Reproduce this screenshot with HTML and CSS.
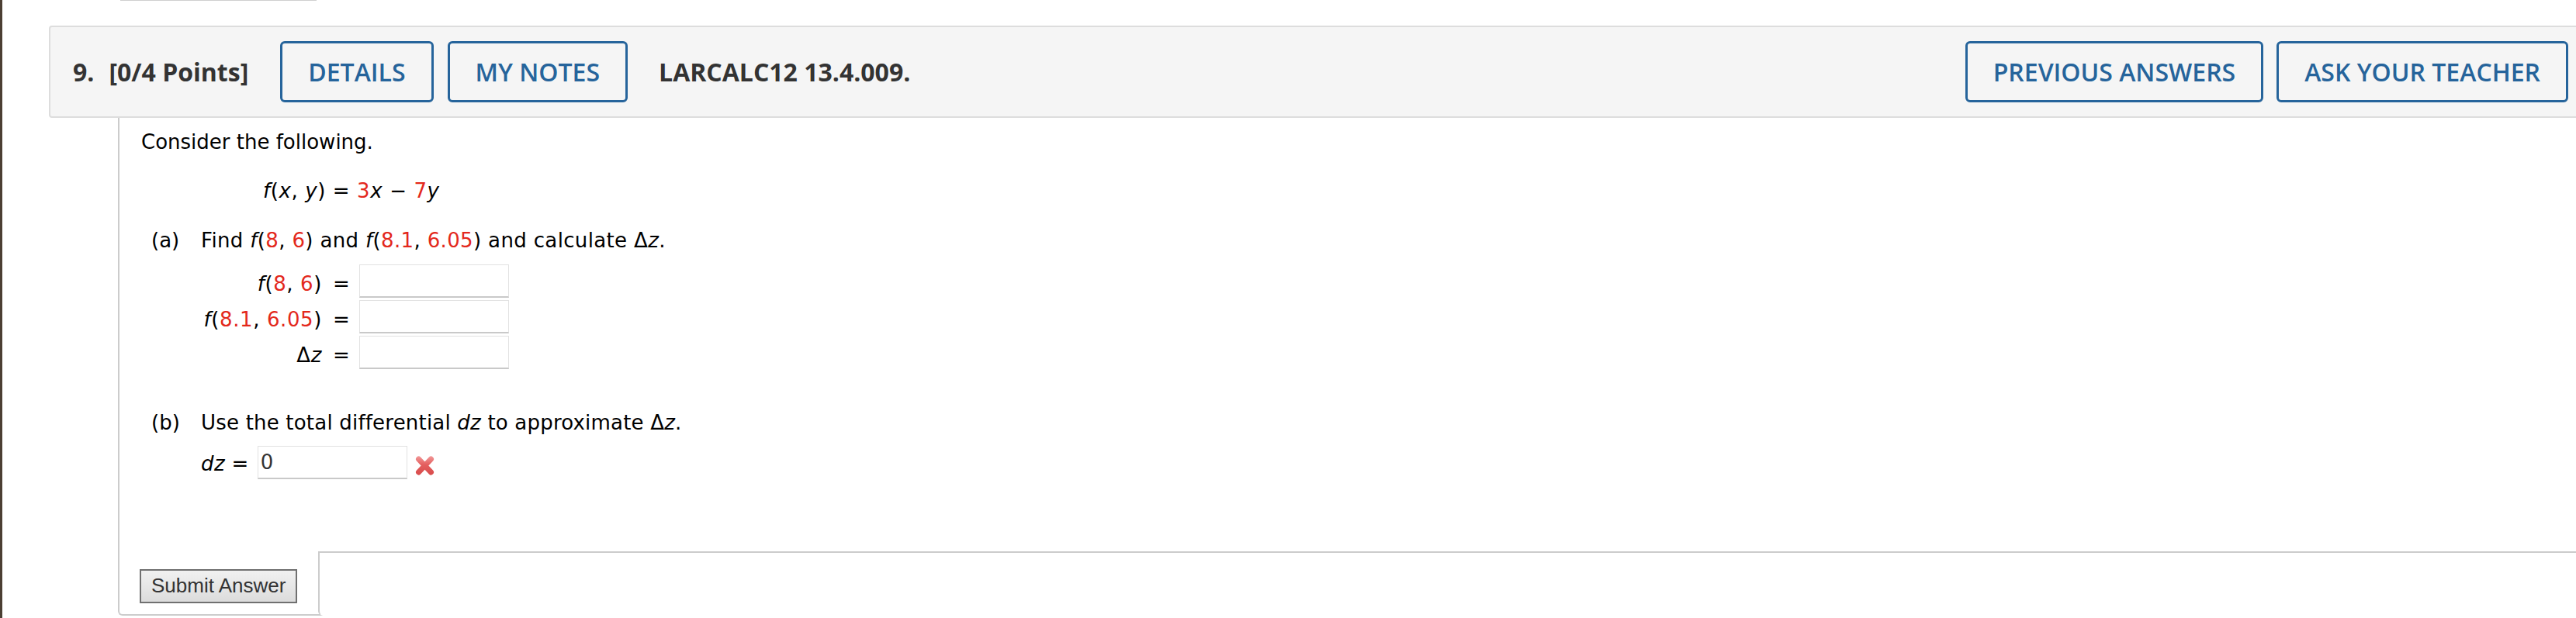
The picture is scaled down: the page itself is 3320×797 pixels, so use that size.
FILE: index.html
```html
<!DOCTYPE html>
<html lang="en">
<head>
<meta charset="utf-8">
<title>Question 9</title>
<link rel="stylesheet" href="styles.css">
</head>
<body>
<div class="page">
  <div class="prev-tail"></div>
  <div class="question">
    <div class="q-header">
      <span class="q-num">9.</span>
      <span class="q-points">[0/4 Points]</span>
      <button class="hbtn btn-details">DETAILS</button>
      <button class="hbtn btn-notes">MY NOTES</button>
      <span class="q-code">LARCALC12 13.4.009.</span>
      <div class="q-actions">
        <button class="hbtn">PREVIOUS ANSWERS</button>
        <button class="hbtn">ASK YOUR TEACHER</button>
      </div>
    </div>
    <div class="q-body">
      <div class="content">
        <p class="intro">Consider the following.</p>
        <p class="formula"><i>f</i>(<i>x</i>, <i>y</i>) = <span class="red">3</span><i>x</i> &minus; <span class="red">7</span><i>y</i></p>
        <p class="part"><span class="part-label">(a)</span>Find <i>f</i>(<span class="red">8</span>, <span class="red">6</span>) and <i>f</i>(<span class="red">8.1</span>, <span class="red">6.05</span>) and calculate &Delta;<i>z</i>.</p>
        <div class="answers">
          <div class="arow">
            <span class="alabel"><i>f</i>(<span class="red">8</span>, <span class="red">6</span>)</span>
            <span class="eq">=</span>
            <input class="ans" type="text">
          </div>
          <div class="arow">
            <span class="alabel"><i>f</i>(<span class="red">8.1</span>, <span class="red">6.05</span>)</span>
            <span class="eq">=</span>
            <input class="ans" type="text">
          </div>
          <div class="arow">
            <span class="alabel">&Delta;<i>z</i></span>
            <span class="eq">=</span>
            <input class="ans" type="text">
          </div>
        </div>
        <p class="part part-b"><span class="part-label">(b)</span>Use the total differential <i>dz</i> to approximate &Delta;<i>z</i>.</p>
        <div class="dz-row">
          <span class="dz-label"><i>dz</i>&nbsp;=</span>
          <input class="ans" type="text" value="0">
          <svg class="xmark" width="25" height="25" viewBox="0 0 25 25" aria-label="incorrect">
            <defs>
              <linearGradient id="xg" x1="0" y1="0" x2="0" y2="25" gradientUnits="userSpaceOnUse">
                <stop offset="0" stop-color="#f29a9a"/>
                <stop offset="0.45" stop-color="#e45e5e"/>
                <stop offset="1" stop-color="#d84b4b"/>
              </linearGradient>
            </defs>
            <path d="M4.5 4 L20.5 21 M20.5 4 L4.5 21" stroke="url(#xg)" stroke-width="7" stroke-linecap="round" fill="none"/>
          </svg>
        </div>
      </div>
      <div class="submit-row">
        <button class="submit">Submit Answer</button>
        <div class="submit-side"></div>
      </div>
    </div>
  </div>
</div>
</body>
</html>
```

FILE: styles.css
```css
html {
  overflow: hidden;
}

body {
  margin: 0;
  background: #fff;
  color: #000;
  font-family: "DejaVu Sans", Verdana, sans-serif;
  font-size: 26px;
}

.page {
  box-sizing: border-box;
  width: 3420px;
  min-height: 797px;
  padding-left: 60px;
  border-left: 3px solid #4b3f33;
}

.prev-tail {
  margin-left: 92px;
  width: 253px;
  height: 1px;
  background: #cfcfcf;
}

.question {
  width: 3279px;
  margin-top: 32px;
}

/* header bar */
.q-header {
  display: flex;
  align-items: center;
  box-sizing: border-box;
  height: 119px;
  padding: 0 30px 0 29px;
  background: #f5f5f5;
  border: 2px solid #dddddd;
  border-radius: 4px;
  font-family: "Open Sans", sans-serif;
  font-size: 32px;
  font-weight: 700;
  color: #333;
  white-space: nowrap;
}

.q-points {
  margin-left: 19px;
}

.hbtn {
  box-sizing: border-box;
  height: 79px;
  margin: 0;
  padding: 0 33px;
  background: transparent;
  border: 3px solid #26649b;
  border-radius: 6px;
  color: #26649b;
  font-family: "Open Sans", sans-serif;
  font-size: 32px;
  font-weight: 600;
  white-space: nowrap;
}

.btn-details {
  margin-left: 41px;
}

.btn-notes {
  margin-left: 18px;
}

.q-code {
  margin-left: 40px;
}

.q-actions {
  display: flex;
  gap: 17px;
  margin-left: auto;
}

/* body */
.q-body {
  margin-left: 89px;
  border-left: 2px solid #cccccc;
  border-bottom: 2px solid #cccccc;
  border-bottom-left-radius: 6px;
}

.content {
  padding: 12.5px 0 0 28px;
}

.content p {
  margin: 0;
  line-height: 36px;
  white-space: nowrap;
}

.red {
  color: #e3281c;
}

.formula {
  margin-top: 27px !important;
  padding-left: 157px;
  letter-spacing: 0.6px;
}

.part {
  margin-top: 28px !important;
  padding-left: 13px;
  letter-spacing: 0.35px;
}

.part-label {
  display: inline-block;
  width: 64px;
  letter-spacing: 0;
}

.answers {
  margin-top: 13px;
}

.arow {
  display: flex;
  align-items: flex-start;
  height: 43px;
  margin-bottom: 3px;
}

.alabel {
  width: 200px;
  margin-left: 33px;
  padding-top: 7.5px;
  line-height: 36px;
  text-align: right;
  white-space: nowrap;
  letter-spacing: 0.6px;
}

.eq {
  margin-left: 14px;
  padding-top: 7.5px;
  line-height: 36px;
}

.ans {
  box-sizing: border-box;
  width: 193px;
  height: 43px;
  margin: 0 0 0 12.5px;
  padding: 0 0 0 3px;
  background: #fff;
  border: 1px solid #e2e2e2;
  border-bottom: 2px solid #c9c9c9;
  border-radius: 0;
  color: #333;
  font-family: "DejaVu Sans", Verdana, sans-serif;
  font-size: 26px;
  outline: none;
}

.part-b {
  margin-top: 51.5px !important;
  letter-spacing: 0.2px;
}

.dz-row {
  display: flex;
  align-items: flex-start;
  height: 43px;
  margin-top: 12px;
  padding-left: 77px;
}

.dz-label {
  padding-top: 4.5px;
  line-height: 36px;
  white-space: nowrap;
  letter-spacing: 0.4px;
}

.dz-row .ans {
  margin-left: 11px;
}

.xmark {
  margin: 13px 0 0 10px;
}

/* submit area */
.submit-row {
  display: flex;
  align-items: flex-end;
  margin-top: 93.3px;
  padding-left: 26px;
}

.submit {
  box-sizing: border-box;
  height: 43.4px;
  margin: 0 0 14.3px 0;
  padding: 0 13px;
  background: linear-gradient(#f1f1f1, #dcdcdc);
  border: 2px solid #707070;
  border-radius: 0;
  color: #333;
  font-family: "Liberation Sans", Arial, sans-serif;
  font-size: 26px;
}

.submit-side {
  flex: 1;
  box-sizing: border-box;
  height: 82.7px;
  margin: 0 0 -2px 26.6px;
  background: #fff;
  border-top: 2px solid #cccccc;
  border-left: 2px solid #cccccc;
  border-bottom-left-radius: 6px;
}
```
